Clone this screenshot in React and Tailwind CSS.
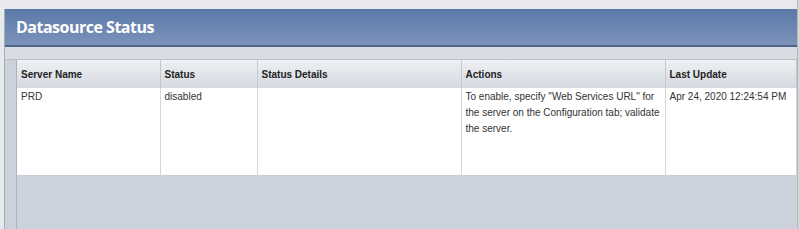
const columns = [
  { label: "Server Name", width: "w-[143px]" },
  { label: "Status", width: "w-[97px]" },
  { label: "Status Details", width: "w-[204px]" },
  { label: "Actions", width: "w-[204px]" },
  { label: "Last Update", width: "w-[131px]" },
];

const rows = [
  {
    id: 1,
    cells: [
      "PRD",
      "disabled",
      "",
      'To enable, specify "Web Services URL" for the server on the Configuration tab; validate the server.',
      "Apr 24, 2020 12:24:54 PM",
    ],
  },
];

export default function App() {
  return (
    <div className="flex h-[229px] w-[800px] overflow-hidden bg-[#e7e9ed] font-['Liberation_Sans',Arial,sans-serif]">
      <div className="flex flex-1 flex-col pl-[4px] pt-[9px]">
        <div className="flex flex-1 flex-col overflow-hidden border-l border-[#a3adbc] bg-[#ccd2db]">
          {/* panel title bar */}
          <div className="flex h-[38px] shrink-0 items-center border-b-2 border-[#4d6389] bg-gradient-to-b from-[#5a79a7] to-[#7d93ba] pl-[11px]">
            <h1 className="font-['Open_Sans',sans-serif] text-[16px] font-bold tracking-[-0.5px] text-white">
              Datasource Status
            </h1>
          </div>
          <div className="h-[13px] shrink-0 border-b border-[#b9c0cb] bg-[#d8dde4]" />
          <div className="flex-1 pl-[11px]">
            <div className="h-full border-l border-[#aab3c0]">
              <table className="w-[779px] table-fixed border-collapse text-[10px] text-[#222]">
                <colgroup>
                  {columns.map((col) => (
                    <col key={col.label} className={col.width} />
                  ))}
                </colgroup>
                <thead>
                  <tr className="h-[28px] bg-gradient-to-b from-[#eef0f3] to-[#d5d9e0]">
                    {columns.map((col) => (
                      <th
                        key={col.label}
                        className="border-r border-[#c3c8d0] px-[4px] text-left align-middle font-bold"
                      >
                        {col.label}
                      </th>
                    ))}
                  </tr>
                </thead>
                <tbody>
                  {rows.map((row) => (
                    <tr key={row.id} className="h-[87px] border-b border-[#c9ced6] bg-white">
                      {row.cells.map((value, i) => (
                        <td
                          key={i}
                          className="border-r border-[#d3d7dd] px-[4px] pt-[1px] align-top leading-[16px] text-[#333]"
                        >
                          {value}
                        </td>
                      ))}
                    </tr>
                  ))}
                </tbody>
              </table>
            </div>
          </div>
        </div>
      </div>
      {/* scroll strip on the right */}
      <div className="w-[8px] border-l border-[#b8b8b8] bg-[#d6d6d6]" />
    </div>
  );
}
